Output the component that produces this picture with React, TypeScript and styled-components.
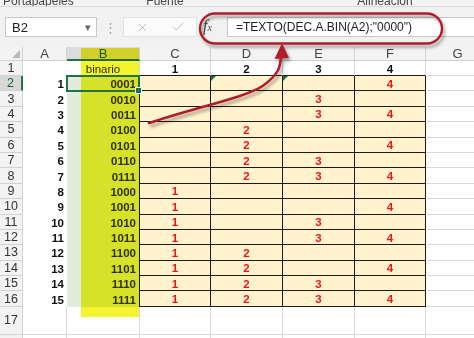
import React from "react";
import styled, { createGlobalStyle, css } from "styled-components";
import { X, Check } from "lucide-react";

const GlobalStyle = createGlobalStyle`
  html, body { margin: 0; padding: 0; background: #fff; }
  body { font-family: "Liberation Sans", Arial, sans-serif; }
`;

const COL_LETTERS = ["A", "B", "C", "D", "E", "F", "G"];

type Kind = "plain" | "blank" | "green" | "beige" | "top";

interface CellData {
  text: string;
  kind: Kind;
  align: "left" | "center" | "right";
  tone: "black" | "red" | "olive";
  bold: boolean;
  flag?: boolean;
}

const bin = (n: number) => n.toString(2).padStart(4, "0");

// builds one sheet row (columns A..G)
const buildRow = (r: number): CellData[] => {
  const empty = (kind: Kind = "plain"): CellData => ({ text: "", kind, align: "center", tone: "black", bold: false });
  if (r === 1) {
    return [
      empty("blank"),
      { text: "binario", kind: "plain", align: "center", tone: "olive", bold: false },
      ...["1", "2", "3", "4"].map((t) => ({ text: t, kind: "top" as Kind, align: "center" as const, tone: "black" as const, bold: true })),
      empty(),
    ];
  }
  if (r >= 2 && r <= 16) {
    const n = r - 1;
    const mark = (bit: number, t: string, flag = false): CellData => ({
      text: n & bit ? t : "",
      kind: "beige",
      align: "center",
      tone: "red",
      bold: true,
      flag: flag && r === 2,
    });
    return [
      { text: String(n), kind: "blank", align: "right", tone: "black", bold: true },
      { text: bin(n), kind: "green", align: "right", tone: "olive", bold: true },
      mark(8, "1"),
      mark(4, "2", true),
      mark(2, "3", true),
      mark(1, "4"),
      empty(),
    ];
  }
  return COL_LETTERS.map(() => empty());
};

const ROWS = Array.from({ length: 18 }, (_, i) => i + 1);

export default function App() {
  return (
    <Page>
      <GlobalStyle />
      <Ribbon>
        <RibbonGroup $width={80} $justify="flex-start">
          <GroupLabel>Portapapeles</GroupLabel>
          <Launcher viewBox="0 0 6 6">
            <path d="M0.5 0.5h5v5M1 5l4-4" stroke="#777" fill="none" strokeWidth="0.8" />
          </Launcher>
        </RibbonGroup>
        <RibbonGroup $width={170} $justify="center">
          <GroupLabel>Fuente</GroupLabel>
        </RibbonGroup>
        <RibbonGroup $width={270} $justify="center">
          <GroupLabel>Alineación</GroupLabel>
        </RibbonGroup>
      </Ribbon>

      <FormulaBar>
        <NameBox>
          <span>B2</span>
          <Caret>▾</Caret>
        </NameBox>
        <Dots>⋮</Dots>
        <IconBox>
          <IconSlot>
            <X size={13} strokeWidth={1.6} color="#b3b3b3" />
          </IconSlot>
          <IconSlot>
            <Check size={14} strokeWidth={1.6} color="#b3b3b3" />
          </IconSlot>
        </IconBox>
        <FxLabel>
          <span>f</span>
          <small>x</small>
        </FxLabel>
        <FormulaInput>=TEXTO(DEC.A.BIN(A2);"0000")</FormulaInput>
      </FormulaBar>

      <Sheet>
        <Corner>
          <CornerMark />
        </Corner>
        {COL_LETTERS.map((c) => (
          <ColHeader key={c} $active={c === "B"}>
            {c}
          </ColHeader>
        ))}
        {ROWS.map((r) => (
          <React.Fragment key={r}>
            <RowHeader $active={r === 2}>{r}</RowHeader>
            {buildRow(r).map((cell, i) => (
              <Cell
                key={i}
                $kind={cell.kind}
                $align={cell.align}
                $tone={cell.tone}
                $bold={cell.bold}
                $flag={!!cell.flag}
              >
                {cell.text}
              </Cell>
            ))}
          </React.Fragment>
        ))}
      </Sheet>

      <Highlighter />
      <Selection>
        <FillHandle />
      </Selection>

      <Annotation viewBox="0 0 474 338">
        <defs>
          <filter id="shade" x="-10%" y="-30%" width="130%" height="170%">
            <feDropShadow dx="2" dy="3" stdDeviation="1.6" floodColor="#000" floodOpacity="0.35" />
          </filter>
        </defs>
        <g filter="url(#shade)">
          <rect x="200" y="13.5" width="242" height="30" rx="15" fill="none" stroke="#b01e2b" strokeWidth="2.4" />
          <path
            d="M149 123 C 200 106 248 97 264 85 S 280 66 281 57"
            fill="none"
            stroke="#b01e2b"
            strokeWidth="2.6"
            strokeLinecap="round"
          />
          <polygon points="282,43 274.5,59 289,58" fill="#b01e2b" />
        </g>
      </Annotation>
    </Page>
  );
}

//styles
const Page = styled.div`
  position: relative;
  width: 474px;
  height: 338px;
  overflow: hidden;
  background: #fff;
`;

const Ribbon = styled.div`
  height: 6px;
  display: flex;
  align-items: flex-end;
  overflow: hidden;
  background: #f4f4f4;
  border-bottom: 1px solid #dadada;
`;

const RibbonGroup = styled.div<{ $width: number; $justify: string }>`
  width: ${(p) => p.$width}px;
  flex-shrink: 0;
  display: flex;
  align-items: flex-end;
  justify-content: ${(p) => p.$justify};
  gap: 8px;
  padding-left: ${(p) => (p.$justify === "flex-start" ? 3 : 0)}px;
  box-sizing: border-box;
`;

const GroupLabel = styled.span`
  font-size: 12px;
  line-height: 10px;
  color: #444;
  white-space: nowrap;
`;

const Launcher = styled.svg`
  width: 6px;
  height: 6px;
  margin-bottom: 1px;
`;

const FormulaBar = styled.div`
  height: 40px;
  display: flex;
  align-items: center;
  padding-left: 5px;
  background: #f1f1f1;
  box-sizing: border-box;
`;

const NameBox = styled.div`
  width: 92px;
  height: 20px;
  box-sizing: border-box;
  display: flex;
  align-items: center;
  justify-content: space-between;
  padding: 0 5px 0 6px;
  background: #fff;
  border: 1px solid #c8c8c8;
  font-size: 13px;
  color: #222;
`;

const Caret = styled.span`
  font-size: 11px;
  color: #666;
`;

const Dots = styled.div`
  width: 26px;
  text-align: center;
  font-size: 13px;
  color: #a8a8a8;
`;

const IconBox = styled.div`
  width: 74px;
  height: 20px;
  display: flex;
  background: #fbfbfb;
  border: 1px solid #e2e2e2;
  box-sizing: border-box;
`;

const IconSlot = styled.div`
  flex: 1;
  display: flex;
  align-items: center;
  justify-content: center;
`;

const FxLabel = styled.div`
  width: 30px;
  padding-left: 6px;
  box-sizing: border-box;
  display: flex;
  align-items: baseline;
  font-family: "Liberation Serif", "Times New Roman", serif;
  font-style: italic;
  font-size: 16px;
  line-height: 16px;
  color: #4a4a4a;

  small {
    font-size: 10px;
    margin-left: 0;
  }
`;

const FormulaInput = styled.div`
  flex: 1;
  height: 20px;
  box-sizing: border-box;
  display: flex;
  align-items: center;
  padding-left: 8px;
  background: #fff;
  border: 1px solid #c8c8c8;
  border-right: none;
  font-size: 12px;
  color: #222;
  white-space: nowrap;
`;

const Sheet = styled.div`
  display: grid;
  grid-template-columns: 23px 44px 73px 71px 72px 72px 71px 64px;
  grid-template-rows: 14px 15px repeat(15, 15.4px) 28px 20px;
  font-size: 11px;
`;

const headerBase = css`
  box-sizing: border-box;
  background: #f3f3f3;
  color: #444;
  display: flex;
  align-items: center;
  justify-content: center;
  border-right: 1px solid #d2d2d2;
  border-bottom: 1px solid #d2d2d2;
`;

const Corner = styled.div`
  ${headerBase};
  position: relative;
`;

const CornerMark = styled.div`
  position: absolute;
  right: 2px;
  bottom: 2px;
  width: 0;
  height: 0;
  border-left: 8px solid transparent;
  border-bottom: 8px solid #b9b9b9;
`;

const ColHeader = styled.div<{ $active: boolean }>`
  ${headerBase};
  font-size: 13px;
  line-height: 13px;
  ${(p) =>
    p.$active &&
    css`
      background: #dcdcdc;
      border-bottom: 2px solid #217346;
      color: #1d5e37;
    `}
`;

const RowHeader = styled.div<{ $active: boolean }>`
  ${headerBase};
  font-size: 12.5px;
  color: #333;
  ${(p) =>
    p.$active &&
    css`
      background: #d8d8d8;
      border-right: 2px solid #217346;
      color: #1d5e37;
    `}
`;

const kindStyles: Record<Kind, ReturnType<typeof css>> = {
  plain: css`
    border-right: 1px solid #dadada;
    border-bottom: 1px solid #dadada;
  `,
  blank: css``,
  top: css`
    border-right: 1px solid #dadada;
    border-bottom: 1px solid #1b1b1b;
  `,
  green: css`
    background: #e1ecdc;
    border-right: 1px solid #1b1b1b;
  `,
  beige: css`
    background: #fff2cc;
    border-right: 1px solid #1b1b1b;
    border-bottom: 1px solid #1b1b1b;
  `,
};

const toneColor = { black: "#111", red: "#e8161b", olive: "#333" };

const Cell = styled.div<{
  $kind: Kind;
  $align: "left" | "center" | "right";
  $tone: "black" | "red" | "olive";
  $bold: boolean;
  $flag: boolean;
}>`
  position: relative;
  box-sizing: border-box;
  display: flex;
  align-items: center;
  justify-content: ${(p) => (p.$align === "right" ? "flex-end" : p.$align === "left" ? "flex-start" : "center")};
  padding: 1px 3px 0 3px;
  background: #fff;
  color: ${(p) => toneColor[p.$tone]};
  font-weight: ${(p) => (p.$bold ? 700 : 400)};
  font-size: 11.5px;
  white-space: nowrap;
  ${(p) => kindStyles[p.$kind]};

  ${(p) =>
    p.$flag &&
    css`
      &::before {
        content: "";
        position: absolute;
        left: 0;
        top: 0;
        border-top: 5px solid #217346;
        border-right: 5px solid transparent;
      }
    `}
`;

const Highlighter = styled.div`
  position: absolute;
  left: 81px;
  top: 48px;
  width: 58px;
  height: 269px;
  background: #f3f330;
  mix-blend-mode: multiply;
  pointer-events: none;
`;

const Selection = styled.div`
  position: absolute;
  left: 66px;
  top: 75px;
  width: 74px;
  height: 17px;
  box-sizing: border-box;
  border: 2px solid #217346;
  pointer-events: none;
`;

const FillHandle = styled.div`
  position: absolute;
  right: -4px;
  bottom: -4px;
  width: 5px;
  height: 5px;
  background: #217346;
  border: 1px solid #fff;
`;

const Annotation = styled.svg`
  position: absolute;
  left: 0;
  top: 0;
  width: 474px;
  height: 338px;
  pointer-events: none;
`;
